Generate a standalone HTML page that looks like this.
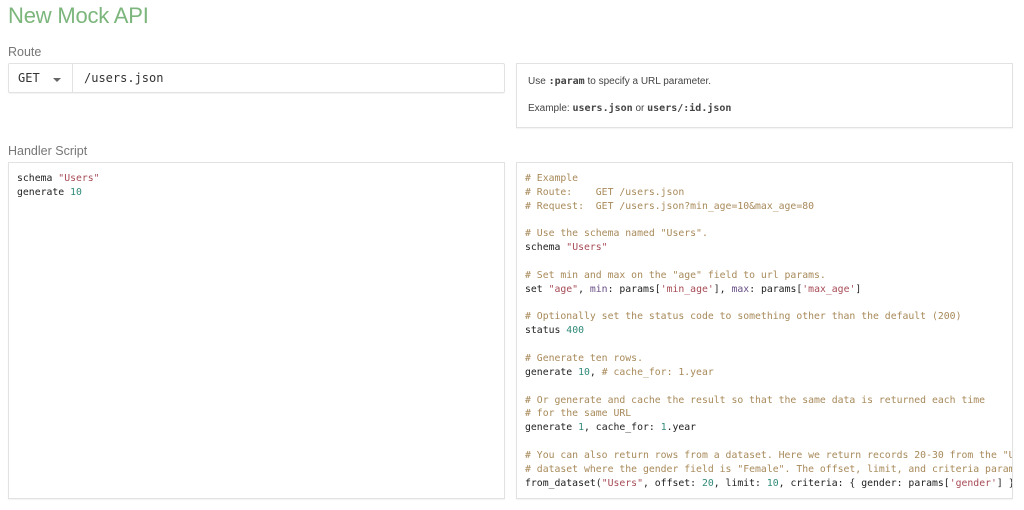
<!DOCTYPE html>
<html><head><style>
*{box-sizing:border-box;margin:0;padding:0}
body{width:1024px;height:510px;background:#fff;font-family:"Liberation Sans",sans-serif;position:relative;overflow:hidden;color:#333}
.abs{position:absolute}
h1{position:absolute;left:8px;top:3px;font-weight:300;font-size:22px;color:#7cb67c;letter-spacing:-0.2px}
.lbl{position:absolute;left:8px;font-size:12.5px;color:#777}
.box{position:absolute;border:1px solid #e2e2e2;background:#fff;box-shadow:0 1px 1px rgba(0,0,0,.05)}
.mono{font-family:"DejaVu Sans Mono","Liberation Mono",monospace}
pre{font-family:"DejaVu Sans Mono","Liberation Mono",monospace;font-size:9.8px;line-height:13.85px;color:#222;white-space:pre}
.c{color:#a88a5a}.s{color:#a64a55}.n{color:#2f8a78}.k{color:#6a4f86}
</style></head><body>
<h1>New Mock API</h1>
<div class="lbl" style="top:45px">Route</div>
<div class="box" style="left:8px;top:63px;width:497px;height:30px;border-radius:2px">
  <div class="abs mono" style="left:9px;top:7px;font-size:12px;color:#333">GET</div>
  <div class="abs" style="left:44px;top:14px;width:0;height:0;border-left:4px solid transparent;border-right:4px solid transparent;border-top:4px solid #666"></div>
  <div class="abs" style="left:63px;top:0;width:1px;height:28px;background:#e2e2e2"></div>
  <div class="abs mono" style="left:75px;top:7px;font-size:12px;color:#333">/users.json</div>
</div>
<div class="box" style="left:516px;top:63px;width:497px;height:65px;font-size:10px;color:#444">
  <div class="abs" style="left:11px;top:12px">Use <b class="mono">:param</b> to specify a URL parameter.</div>
  <div class="abs" style="left:11px;top:39px">Example: <b class="mono">users.json</b> or <b class="mono">users/:id.json</b></div>
</div>
<div class="lbl" style="top:144px">Handler Script</div>
<div class="box" style="left:8px;top:162px;width:497px;height:337px">
<pre class="abs" style="left:8px;top:9px">schema <span class="s">"Users"</span>
generate <span class="n">10</span></pre>
</div>
<div class="box" style="left:516px;top:162px;width:497px;height:337px;overflow:hidden">
<pre class="abs" style="left:8px;top:9px"><span class="c"># Example
# Route:    GET /users.json
# Request:  GET /users.json?min_age=10&amp;max_age=80</span>

<span class="c"># Use the schema named "Users".</span>
schema <span class="s">"Users"</span>

<span class="c"># Set min and max on the "age" field to url params.</span>
set <span class="s">"age"</span>, <span class="k">min</span>: params[<span class="s">'min_age'</span>], <span class="k">max</span>: params[<span class="s">'max_age'</span>]

<span class="c"># Optionally set the status code to something other than the default (200)</span>
status <span class="n">400</span>

<span class="c"># Generate ten rows.</span>
generate <span class="n">10</span>, <span class="c"># cache_for: 1.year</span>

<span class="c"># Or generate and cache the result so that the same data is returned each time
# for the same URL</span>
generate <span class="n">1</span>, cache_for: <span class="n">1</span>.year

<span class="c"># You can also return rows from a dataset. Here we return records 20-30 from the "Users"
# dataset where the gender field is "Female". The offset, limit, and criteria parameters</span>
from_dataset(<span class="s">"Users"</span>, offset: <span class="n">20</span>, limit: <span class="n">10</span>, criteria: { gender: params[<span class="s">'gender'</span>] })</pre>
</div>
</body></html>
